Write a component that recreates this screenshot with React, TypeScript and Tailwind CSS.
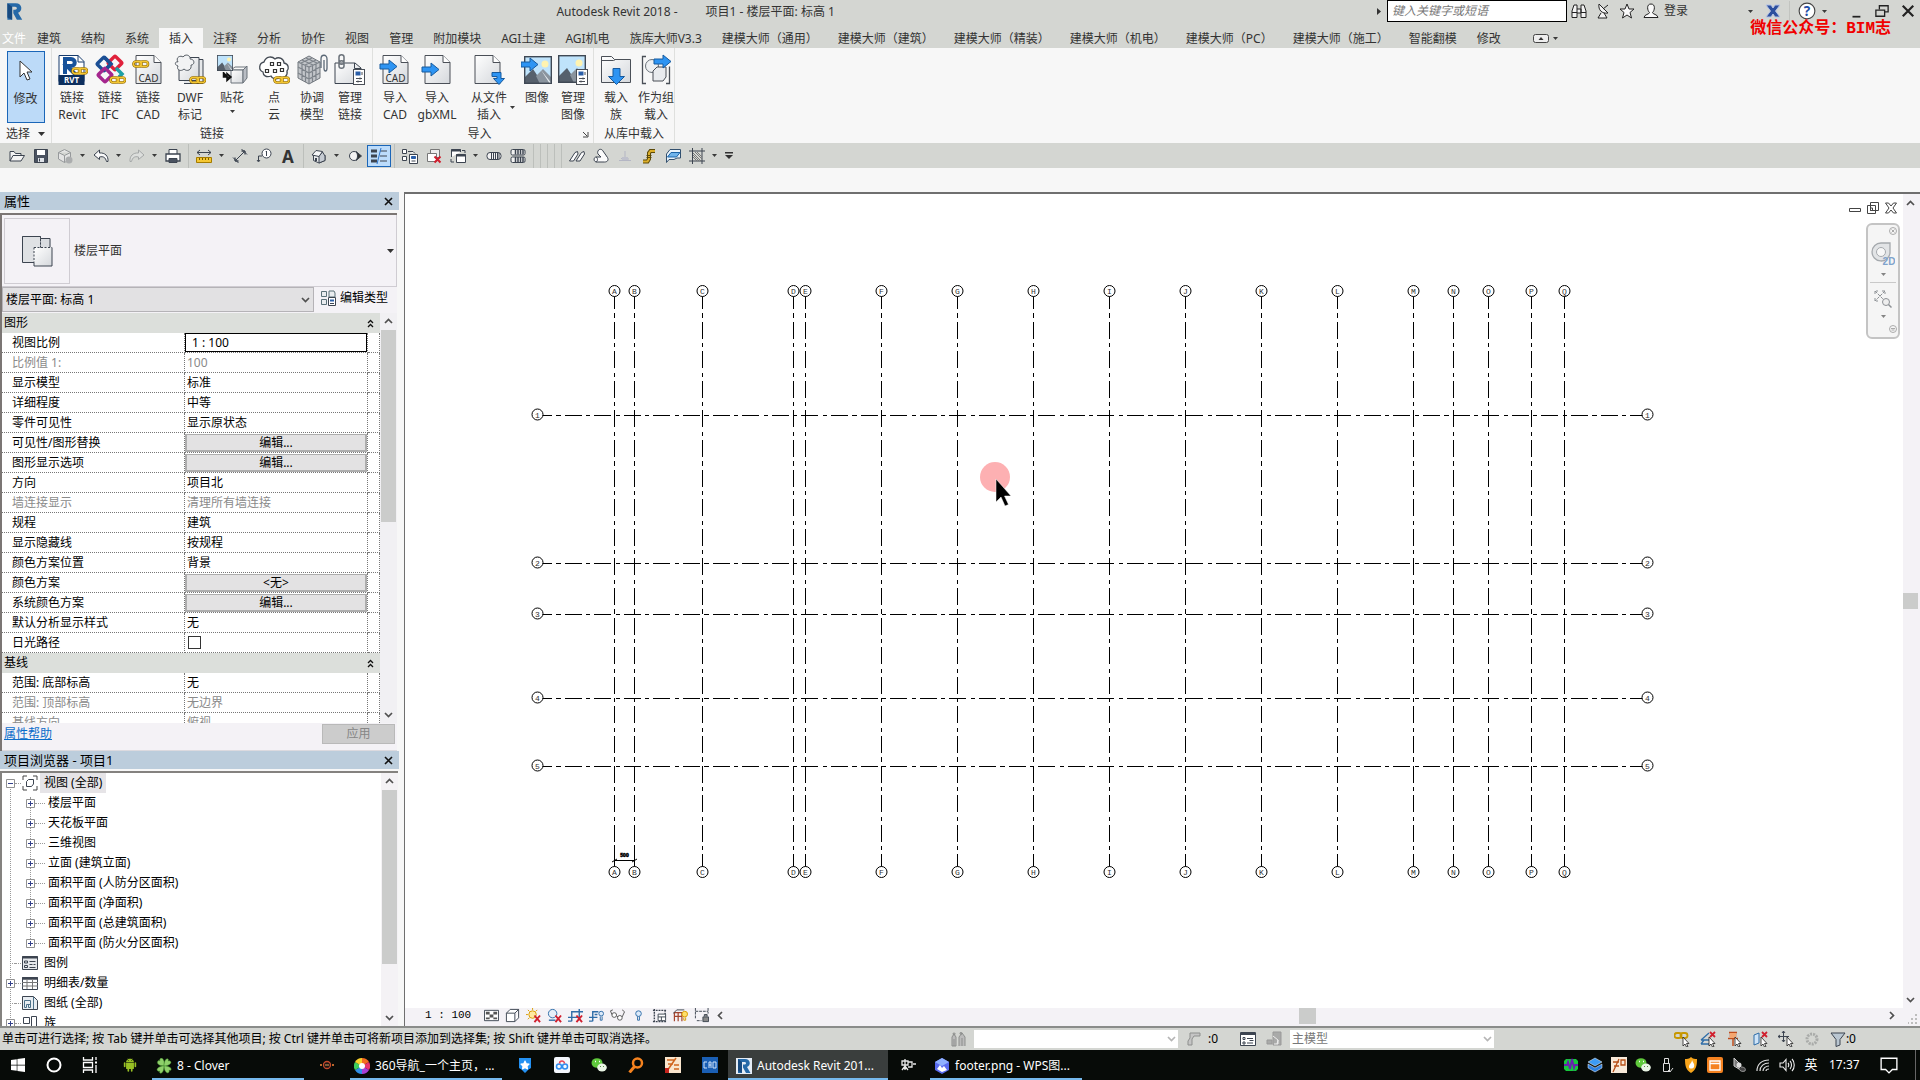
import React from 'react'
import { IoLogoAndroid } from 'react-icons/io'
import { FaWindows, FaStar } from 'react-icons/fa'

type DrawProps = { size?: number; box?: number; children: React.ReactNode }

function Draw({ size = 16, box = 16, children }: DrawProps) {
  return (
    <svg width={size} height={size} viewBox={`0 0 ${box} ${box}`} fill="none" stroke="#3c4450" strokeWidth="1" className="shrink-0" aria-hidden="true">
      {children}
    </svg>
  )
}

// yellow link badge that sits in the corner of the "link" icons
function Chain({ x, y }: { x: number; y: number }) {
  return (
    <g transform={`translate(${x} ${y})`}>
      <rect x="0.5" y="0.5" width="8" height="5" rx="2.5" stroke="#8a6400" strokeWidth="2.6" />
      <rect x="7" y="0.5" width="8" height="5" rx="2.5" stroke="#8a6400" strokeWidth="2.6" />
      <rect x="0.5" y="0.5" width="8" height="5" rx="2.5" stroke="#f5c732" strokeWidth="1.3" />
      <rect x="7" y="0.5" width="8" height="5" rx="2.5" stroke="#f5c732" strokeWidth="1.3" />
    </g>
  )
}

function Sheet({ x = 3, cad = false }: { x?: number; cad?: boolean }) {
  return (
    <g>
      <path d={`M${x} 1.5h18l7 7v21h-25z`} fill="url(#paper)" stroke="#4a4f57" />
      <path d={`M${x + 18} 1.5v7h7`} fill="#fff" stroke="#4a4f57" />
      {cad && <text x={x + 12.5} y="28" textAnchor="middle" fontSize="10" fill="#333" stroke="none">CAD</text>}
    </g>
  )
}

const ArrowRight = ({ x, y }: { x: number; y: number }) => (
  <path d={`M${x} ${y + 4}h9v-4l8 6.5-8 6.5v-4h-9z`} fill="#2d94f3" stroke="#175a9e" />
)

function Photo({ x, y, w }: { x: number; y: number; w: number }) {
  return (
    <svg x={x} y={y} width={w} height={w} viewBox="0 0 28 28" stroke="none">
      <rect width="28" height="28" fill="#bfe3fb" />
      <circle cx="21" cy="8" r="3.5" fill="#fff3b0" />
      <path d="M0 22 9 13l10 15H0z" fill="#56606c" />
      <path d="m12 20 7-7 9 9v6H16z" fill="#8a949e" />
      <path d="m17 14 9 14h2z" fill="#e8edf0" />
      <rect x="0.7" y="0.7" width="26.6" height="26.6" fill="none" stroke="#3f4854" strokeWidth="1.4" />
    </svg>
  )
}

const Manage = ({ x, y }: { x: number; y: number }) => (
  <g transform={`translate(${x} ${y})`}>
    <rect x="0.5" y="0.5" width="11" height="15" fill="#fff" stroke="#4a4f57" />
    <rect x="2.5" y="2.5" width="5" height="4" fill="#2a5ea8" stroke="none" />
    <path d="M9 3v3M3 9.5h6M3 12.5h6" stroke="#4a4f57" />
    <path d="M7 8.5v2M5 11.5v2" stroke="#4a4f57" />
  </g>
)

const bigIcons: Record<string, React.ReactNode> = {
  rvt: (
    <>
      <path d="M3 1.5h19l6 6v20H3z" fill="#fff" stroke="#173b6c" />
      <path d="M9 20V5h6c5 0 5 7 0 7h-4l8 8" stroke="#17529b" strokeWidth="4" />
      <path d="M2.5 21h26v10h-26z" fill="#0d2f5e" stroke="none" />
      <path d="M22 1v7h6" stroke="#173b6c" />
      <text x="15.5" y="29" textAnchor="middle" fontSize="8" fontWeight="700" fill="#fff" stroke="none">RVT</text>
      <Chain x={16} y={14} />
    </>
  ),
  ifc: (
    <>
      <rect x="5" y="5" width="10" height="10" rx="1" transform="rotate(45 10 10)" stroke="#1b4f95" strokeWidth="3.5" />
      <rect x="16" y="4" width="10" height="10" rx="1" transform="rotate(45 21 9)" stroke="#e0213b" strokeWidth="3.5" />
      <rect x="6" y="16" width="10" height="10" rx="1" transform="rotate(45 11 21)" stroke="#a5268e" strokeWidth="3.5" />
      <path d="m22 14 6 6-3 3" stroke="#1d9fa5" strokeWidth="3.5" />
      <path d="m10 3 7 7-4 4" stroke="#1b4f95" strokeWidth="3.5" />
      <Chain x={16} y={23} />
    </>
  ),
  cad: (
    <>
      <Sheet x={4} cad />
      <Chain x={1} y={7} />
    </>
  ),
  dwf: (
    <>
      <path d="M10 5.5h19v24H10" fill="#e6e8ea" />
      <path d="M5 3.5h20v23H5z" fill="url(#paper)" />
      <path d="M4 8c-3-5 3-7 5-5 3-4 8-1 7 2 5 0 5 6 1 6 1 5-4 7-7 4-3 3-8 1-6-3-4-1-3-5 0-4z" fill="#f2f3f4" stroke="#555c64" />
      <Chain x={16} y={23} />
    </>
  ),
  decal: (
    <>
      <path d="m15 16 4-3h11l-3 3z" fill="#fafafa" stroke="#6b727a" />
      <path d="M15 16h12v13H15z" fill="url(#paper)" stroke="#6b727a" />
      <path d="m27 16 4-4v12l-4 5z" fill="#b9bdc4" stroke="#6b727a" />
      <Photo x={1} y={1} w={16} />
      <path d="M7.5 18v5h6M11 19.5l4 3.5-4 3.5z" fill="#111" stroke="#111" strokeWidth="1.5" />
    </>
  ),
  cloud: (
    <>
      <path d="M6 8C8 2 14 2 17 5c4-3 9 0 9 4 5 1 5 6 3 8 1 5-3 8-7 6-3 3-8 2-9-1-5 2-8-1-8-4-5-2-4-9 1-10z" fill="#fff" stroke="#444b54" strokeWidth="1.3" />
      <path d="M12.5 8.5h3v3h-3zM19.5 8.5h3v3h-3zM7.5 15.5h3v3h-3zM15.5 15.5h3v3h-3zM22.5 14.5h3v3h-3z" stroke="#333" strokeWidth="1.2" />
      <Chain x={16} y={23} />
    </>
  ),
  coord: (
    <>
      <path d="m2 8 11-6 11 6v16l-11 6-11-6z" fill="#c3c6ca" stroke="#70767d" />
      <path d="m2 8 11 5 11-5M13 13v17M6 10v16M9.5 12v16M16.5 12v16M20 10v16M2 13l11 6 11-6M2 19l11 6 11-6M6 6l11 5M10 4l11 5M20 6 9 11M16 4 5 9" stroke="#7d838a" strokeWidth="1.2" />
      <path d="M28 6v8c0 4 3 4 3 0V5c0-5-6-5-6 0v9" stroke="#5b6876" strokeWidth="1.3" />
    </>
  ),
  manageLinks: (
    <>
      <path d="M1 12v17.5h26V14l-6-5H1z" fill="url(#paper)" />
      <path d="M20.5 9v5.5H27" />
      <path d="M5 3c0-3 5-3 5 0v5c0 3-5 3-5 0zM5 9c0-3 5-3 5 0v3c0 3-5 3-5 0z" stroke="#6b727a" strokeWidth="1.5" />
      <Manage x={19} y={15} />
    </>
  ),
  importCad: (
    <>
      <Sheet x={4} cad />
      <ArrowRight x={1} y={6} />
    </>
  ),
  importXml: (
    <>
      <Sheet x={4} />
      <ArrowRight x={1} y={9} />
    </>
  ),
  fromFile: (
    <>
      <Sheet x={2} />
      <path d="M19 18.5h9v6h3.5l-5.5 6-5.5-6h3.5v-2h-5z" fill="#2d94f3" stroke="#175a9e" />
    </>
  ),
  image: (
    <>
      <Photo x={3} y={2} w={28} />
      <ArrowRight x={0} y={4} />
    </>
  ),
  manageImages: (
    <>
      <Photo x={1} y={1} w={28} />
      <Manage x={19} y={15} />
    </>
  ),
  loadFamily: (
    <>
      <path d="M1.5 28.5V2.5h10l3 3h16v23z" fill="url(#paper)" stroke="#4a4f57" />
      <path d="M1.5 6.5h12l2-1" stroke="#4a4f57" />
      <path d="M13 14.5h7v8h4.5l-8 8-8-8H13z" fill="#2d94f3" stroke="#175a9e" />
    </>
  ),
  loadGroup: (
    <>
      <path d="M6 2.5H2.5v27H6M26 29.5h3.5v-17" stroke="#4a4f57" strokeWidth="1.3" />
      <circle cx="12" cy="12" r="6.5" fill="#eef0f2" stroke="#6b727a" />
      <path d="m13 17 4-4h9v10l-3 4H13z" fill="#e9ebee" stroke="#4a4f57" />
      <ArrowRight x={14} y={1} />
    </>
  ),
}

type RibbonItem = { icon: string; lines: string[]; width: string; arrow?: 'below' | 'side' }

const linkItems: RibbonItem[] = [
  { icon: 'rvt', lines: ['链接', 'Revit'], width: 'w-10' },
  { icon: 'ifc', lines: ['链接', 'IFC'], width: 'w-9' },
  { icon: 'cad', lines: ['链接', 'CAD'], width: 'w-10' },
  { icon: 'dwf', lines: ['DWF', '标记'], width: 'w-11' },
  { icon: 'decal', lines: ['贴花'], width: 'w-10', arrow: 'below' },
  { icon: 'cloud', lines: ['点', '云'], width: 'w-11' },
  { icon: 'coord', lines: ['协调', '模型'], width: 'w-8' },
  { icon: 'manageLinks', lines: ['管理', '链接'], width: 'w-11' },
]

const importItems: RibbonItem[] = [
  { icon: 'importCad', lines: ['导入', 'CAD'], width: 'w-11' },
  { icon: 'importXml', lines: ['导入', 'gbXML'], width: 'w-10' },
  { icon: 'fromFile', lines: ['从文件', '插入'], width: 'w-16', arrow: 'side' },
  { icon: 'image', lines: ['图像'], width: 'w-8' },
  { icon: 'manageImages', lines: ['管理', '图像'], width: 'w-10' },
]

const loadItems: RibbonItem[] = [
  { icon: 'loadFamily', lines: ['载入', '族'], width: 'w-11' },
  { icon: 'loadGroup', lines: ['作为组', '载入'], width: 'w-9' },
]

const tabs = ['建筑', '结构', '系统', '插入', '注释', '分析', '协作', '视图', '管理', '附加模块', 'AGI土建', 'AGI机电', '族库大师V3.3', '建模大师（通用）', '建模大师（建筑）', '建模大师（精装）', '建模大师（机电）', '建模大师（PC）', '建模大师（施工）', '智能翻模', '修改']

const Caret = ({ className = '' }: { className?: string }) => (
  <svg width="5" height="3" viewBox="0 0 5 3" className={`shrink-0 ${className}`} aria-hidden="true">
    <path d="M0 0h5L2.5 3z" fill="#3a3a3a" />
  </svg>
)

const Chevron = ({ turn = '', color = '#505050' }: { turn?: string; color?: string }) => (
  <svg width="9" height="9" viewBox="0 0 9 9" className={`shrink-0 ${turn}`} aria-hidden="true">
    <path d="m1 3 3.5 3.5L8 3" fill="none" stroke={color} strokeWidth="1.7" />
  </svg>
)

const Cross = () => (
  <svg width="9" height="9" viewBox="0 0 9 9" aria-hidden="true">
    <path d="m1 1 7 7M8 1 1 8" stroke="#111" strokeWidth="1.6" />
  </svg>
)

function RibbonPanel({ title, items, launcher }: { title: string; items: RibbonItem[]; launcher?: boolean }) {
  return (
    <section className="flex flex-col border-r border-[#dfe0de]">
      <div className="flex flex-1">
        {items.map((item) => (
          <button key={item.icon} type="button" className={`flex flex-col items-center pt-1.5 ${item.width}`}>
            <Draw size={32} box={32}>{bigIcons[item.icon]}</Draw>
            <span className="relative pt-[3px] leading-[17px] whitespace-nowrap">
              {item.lines.map((line) => <span key={line} className="block">{line}</span>)}
              {item.arrow === 'side' && <Caret className="absolute top-5 -right-2" />}
            </span>
            {item.arrow === 'below' && <Caret className="mt-1" />}
          </button>
        ))}
      </div>
      <div className="flex h-[18px] items-center px-1 leading-[18px]">
        <span className="flex-1 text-center">{title}</span>
        {launcher && (
          <button type="button" aria-label="展开">
            <svg width="7" height="7" viewBox="0 0 7 7"><path d="m1 1 4 4M6 1v5H1" fill="none" stroke="#444" /></svg>
          </button>
        )}
      </div>
    </section>
  )
}

const quick: Record<string, React.ReactNode> = {
  open: <path d="M1 13V3.5h4l1.5 2H12V8M1 13l3-5.5h11.5L12 13z" fill="#f3f3f3" />,
  save: <><path d="M1.5 1.5h13v13h-13z" fill="#4a5260" /><path d="M4 2h8v5H4z" fill="#fff" stroke="none" /><path d="M5 10h6v4H5z" fill="#dfe3e8" stroke="none" /><path d="M6.5 10.5v3" /></>,
  cube: <><path d="m1.5 4.5 6-3 6 3v6.5l-6 3.5-6-3.5zM1.5 4.5l6 3 6-3M7.5 7.5v7" stroke="#96999b" fill="#e4e4e4" /><circle cx="12" cy="12" r="3.5" fill="#abadae" stroke="none" /></>,
  undo: <path d="M6.5 2 1 7l5.5 4.5V9c4-1 6 .5 7 4.5h1.5C15.5 8 12 4.5 6.5 5z" fill="#fafafa" />,
  redo: <path d="M9.5 2 15 7l-5.5 4.5V9c-4-1-6 .5-7 4.5H1C.5 8 4 4.5 9.5 5z" fill="#dcdedc" stroke="#a5a8a8" />,
  print: <><path d="M4 6V1.5h8V6" fill="#fff" /><path d="M1 6h14v7H1z" fill="#fff" strokeWidth="1.3" /><path d="M4 10.5h8v4H4z" fill="#4a5260" /></>,
  measure: <><path d="M1 4.5h14M4 2 1 4.5 4 7M12 2l3 2.5L12 7" /><path d="M.5 9.5h15v5H.5z" fill="#f5c732" stroke="#a57c00" /><path d="M3.5 10v2M6.5 10v2M9.5 10v2M12.5 10v2" stroke="#7a5a00" /></>,
  dim: <><path d="m3 13 10-10M1 9.5 6.5 15M9.5 1 15 6.5" /><path d="M3 13V9.5M3 13h3.5M13 3v3.5M13 3H9.5" strokeWidth="1.3" /></>,
  tag: <><circle cx="10.5" cy="5.5" r="4.5" fill="#fff" /><path d="M10 3.5 10.5 3v5M6 8H2.5v5M1 12l1.5 2L4 12" /></>,
  text: <text x="8" y="14.5" textAnchor="middle" fontSize="17" fontWeight="700" fill="#333" stroke="none">A</text>,
  house: <><path d="M2.5 7v5.5L8 15l6-2.5V7" fill="#e9ebed" /><path d="M8 15V8l3.5-4L14 8v4.5z" fill="#c6ccd3" /><path d="M1 7 5 2.5l6.5 1L8 8.5z" fill="#f6f7f8" /><path d="M5 10v3" strokeWidth="2" /></>,
  section: <><circle cx="7" cy="8" r="4.5" fill="#f3f3f3" /><path d="M9 3.5 14.5 8 9 12.5c2-3 2-6 0-9z" fill="#333" /></>,
  thin: <><path d="M0 3h6M0 8h6M0 13h6" strokeWidth="3" /><path d="M9 3h7M9 8h7M9 13h7" /><path d="M10 0 6 16" stroke="#2d74c8" /></>,
  views: <><path d="M.5 1.5h4v4h-4zM.5 8.5h4v4h-4zM6 3.5h5l2 2" fill="#fff" /><path d="M7.5 6.5h8v9h-8z" fill="#fff" /><path d="M9.5 8.5h4v2h-4z" fill="#2a5ea8" stroke="#2a5ea8" /><path d="M9.5 13h4" /></>,
  closeHidden: <><path d="M4.5 1.5h9v8h-9z" fill="#eee" stroke="#777" /><path d="M1.5 5.5h9v8h-9z" fill="#fff" stroke="#777" /><path d="m8.5 8.5 6 6M14.5 8.5l-6 6" stroke="#d01f2e" strokeWidth="2" /></>,
  switch: <><path d="M1.5 9V1.5h9V4" fill="#fff" /><path d="M6.5 6.5h9v8h-9z" fill="#fff" /><path d="M1 2.5h10M6 7.5h10" strokeWidth="2" /><path d="M12 2.5h3V5M1 11v3h3" /></>,
  duct: <><rect x="1" y="4.5" width="14" height="7" rx="3" fill="#f2f2f2" /><path d="M5.5 5v6M7.5 5v6M9.5 5v6M11.5 5v6M13 5v6" /></>,
  ducts: <><rect x="1" y="1.5" width="14" height="5.5" rx="1.5" fill="#f2f2f2" /><rect x="1" y="9" width="14" height="5.5" rx="1.5" fill="#f2f2f2" /><path d="M5.5 2v4.5M8 2v4.5M10.5 2v4.5M13 2v4.5M5.5 9v5M8 9v5M10.5 9v5M13 9v5" strokeWidth="1.5" /></>,
  slabs: <path d="M.5 13 6 4.5l2.5-1L9 6 4.5 13zM7 13l5.5-8.5 2.5-1 .5 2.5L11 13z" fill="#fbfbfb" />,
  pipe: <path d="M5 3c1-2.5 4-2 5 0l4.5 6.5c1.5 3-.5 4.5-3 4.5H3c-3-1-2-5 0-5h5L5 6C4.5 5 4.5 4 5 3zM3 9c2 1 2 4 0 5" fill="#fbfbfb" />,
  faint: <><path d="M2 12.5h12M4 10.5l8 .5M8 3v8" stroke="#b4b6c4" /><path d="M5 9h6v3H5z" fill="#bfc1cc" stroke="none" /></>,
  elbow: <><path d="M2 13.5h4.5L8 11V5l1.5-2H14" stroke="#5c4a08" strokeWidth="4" /><path d="M2 13.5h4.5L8 11V5l1.5-2H14" stroke="#dcae2a" strokeWidth="2" /><path d="M5.5 7.5h5M5.5 9.5h5" stroke="#5c4a08" /></>,
  plane: <><path d="M5 1.5h10.5V10H12l-3 1.5H4L1.5 14.5V6z" fill="#eaf4fc" stroke="#33506e" /><path d="M2.5 9 6 4.5h9L11.5 9z" fill="#6fb4ec" stroke="#1c64a8" /></>,
  region: <><path d="M3.5 0v16M13 0v16M0 3h16M0 13h16" /><path d="m4 5 8 8M4 9l4 4M8 4l5 5M6 4l7 7M4 7l6 6" stroke="#777" /></>,
}

function Quick({ name, arrow, active }: { name: string; arrow?: boolean; active?: boolean }) {
  return (
    <>
      <button type="button" aria-label={name} className={`flex h-[22px] w-6 items-center justify-center ${active ? 'border border-[#1b66b8] bg-[#bcdcfb]' : ''}`}>
        <Draw>{quick[name]}</Draw>
      </button>
      {arrow && <span className="flex w-3 justify-start pl-[3px]"><Caret /></span>}
    </>
  )
}

const Rule = () => <span className="mx-[3px] h-6 w-px bg-[#bcbfbb]" />

type Prop = { label: string; value?: string; kind?: 'input' | 'button' | 'check'; dim?: boolean }

const graphics: Prop[] = [
  { label: '视图比例', value: '1 : 100', kind: 'input' },
  { label: '比例值 1:', value: '100', dim: true },
  { label: '显示模型', value: '标准' },
  { label: '详细程度', value: '中等' },
  { label: '零件可见性', value: '显示原状态' },
  { label: '可见性/图形替换', value: '编辑...', kind: 'button' },
  { label: '图形显示选项', value: '编辑...', kind: 'button' },
  { label: '方向', value: '项目北' },
  { label: '墙连接显示', value: '清理所有墙连接', dim: true },
  { label: '规程', value: '建筑' },
  { label: '显示隐藏线', value: '按规程' },
  { label: '颜色方案位置', value: '背景' },
  { label: '颜色方案', value: '<无>', kind: 'button' },
  { label: '系统颜色方案', value: '编辑...', kind: 'button' },
  { label: '默认分析显示样式', value: '无' },
  { label: '日光路径', kind: 'check' },
]

const underlay: Prop[] = [
  { label: '范围: 底部标高', value: '无' },
  { label: '范围: 顶部标高', value: '无边界', dim: true },
  { label: '基线方向', value: '俯视', dim: true },
]

function PropRow({ label, value, kind, dim }: Prop) {
  const id = `prop-${label}`
  return (
    <tr className={`h-5 ${dim ? 'text-[#8a8a8a]' : 'text-black'}`}>
      <th scope="row" className="border-r border-b border-dotted border-[#777] p-0 pl-2.5 text-left font-normal">
        <label htmlFor={kind ? id : undefined}>{label}</label>
      </th>
      <td className="border-r border-b border-dotted border-[#777] p-0">
        {kind === 'input' && <input id={id} defaultValue={value} className="block h-[19px] w-full border border-black px-1.5 outline-none" />}
        {kind === 'button' && <button id={id} type="button" className="block h-[18px] w-full border-2 border-t border-[#adadad] bg-[#e3e2e3] leading-[15px]">{value}</button>}
        {kind === 'check' && <input id={id} type="checkbox" className="ml-[3px] block size-[13px] appearance-none border border-[#333] bg-white" />}
        {!kind && <span className="pl-0.5">{value}</span>}
      </td>
      <td className="border-r border-b border-dotted border-[#777] p-0" />
    </tr>
  )
}

function GroupRow({ title }: { title: string }) {
  return (
    <tr className="h-5 bg-[#dcdfdb] text-black">
      <th colSpan={3} scope="colgroup" className="p-0 pr-1.5 pl-0.5 text-left font-normal">
        <span className="flex items-center justify-between">
          {title}
          <svg width="7" height="9" viewBox="0 0 7 9"><path d="M1 4 3.5 1.5 6 4M1 8l2.5-2.5L6 8" fill="none" stroke="#111" strokeWidth="1.3" /></svg>
        </span>
      </th>
    </tr>
  )
}

function DockTitle({ title }: { title: string }) {
  return (
    <header className="flex h-[18px] shrink-0 items-center justify-between bg-[#bccddc] pr-1.5 pl-1 text-black">
      <h2 className="text-[13px] leading-[18px]">{title}</h2>
      <button type="button" aria-label="关闭"><Cross /></button>
    </header>
  )
}

function Properties() {
  return (
    <section className="flex min-h-0 flex-1 flex-col">
      <DockTitle title="属性" />
      <div className="mt-[3px] mr-0.5 flex min-h-0 flex-1 flex-col border-t-2 border-l-2 border-[#7b7674] bg-[#f4f2f6]">
        <button type="button" className="flex h-[72px] shrink-0 items-center border-r border-b border-[#cfccd2] pr-0.5">
          <span className="ml-0.5 flex h-[66px] w-[66px] items-center justify-center border border-[#cfccd2]">
            <Draw size={32} box={32}>
              <path d="M1.5 1.5h18v26h-18z" fill="#dfe1e4" />
              <path d="M19.5 3.5h10v10h-10z" fill="#d9dce0" stroke="none" />
              <path d="M19.5 3.5h9.5v9M1.5 1.5h18" />
              <path d="M13 12.5h18v18.5H13z" fill="url(#paper)" stroke="none" />
              <path d="M31 12.5V31H13v-3.5" />
              <path d="M19.5 4v8.5M13 12.5h18M13 12.5v15" strokeDasharray="2 1.5" />
            </Draw>
          </span>
          <span className="ml-1 flex-1 text-left">楼层平面</span>
          <svg width="7" height="4" viewBox="0 0 7 4"><path d="M0 0h7L3.5 4z" fill="#333" /></svg>
        </button>
        <div className="flex h-[26px] shrink-0 items-start text-black">
          <div className="relative w-[312px]">
            <select aria-label="类型" className="block h-[25px] w-full appearance-none border border-[#b5b3b7] bg-[#e2e1e3] px-[3px]">
              <option>楼层平面: 标高 1</option>
            </select>
            <span className="pointer-events-none absolute top-2 right-1"><Chevron /></span>
          </div>
          <button type="button" className="ml-1.5 flex h-[22px] items-center gap-1">
            <Draw>
              <path d="M1.5 1.5h5v5h-5zM9 1h5l1 2v4H9zM1.5 9.5h5v5h-5z" fill="#e9ecef" stroke="#5b7078" />
              <path d="M8.5 7.5h7v8h-7z" fill="#fff" /><path d="M10 9.5h4v2h-4z" fill="#2a5ea8" stroke="none" /><path d="M10 13.5h4" />
            </Draw>
            编辑类型
          </button>
        </div>
        <div className="flex min-h-0 flex-1">
          <div className="min-h-0 flex-1 overflow-hidden bg-white">
            <table className="w-full table-fixed border-separate border-spacing-0 leading-[18px]">
              <colgroup><col /><col className="w-[183px]" /><col className="w-3" /></colgroup>
              <tbody>
                <GroupRow title="图形" />
                {graphics.map((p) => <PropRow key={p.label} {...p} />)}
                <GroupRow title="基线" />
                {underlay.map((p) => <PropRow key={p.label} {...p} />)}
              </tbody>
            </table>
          </div>
          <div className="flex w-[17px] flex-col items-center justify-between bg-[#f1f0f3]">
            <span className="flex h-[17px] items-center"><Chevron turn="rotate-180" /></span>
            <span className="mb-auto h-[192px] w-[15px] bg-[#cbcccb]" />
            <span className="flex h-[17px] items-center"><Chevron /></span>
          </div>
        </div>
        <footer className="flex h-7 shrink-0 items-start justify-between border-b border-[#dcdadf] pr-0.5">
          <a href="#help" className="pl-0.5 leading-[22px] text-[#0a6cc9] underline">属性帮助</a>
          <button type="button" disabled className="mt-px h-5 w-[73px] border border-[#b9b9b9] bg-[#cccccc] leading-[18px] text-[#868686]">应用</button>
        </footer>
      </div>
    </section>
  )
}

const viewNodes = ['楼层平面', '天花板平面', '三维视图', '立面 (建筑立面)', '面积平面 (人防分区面积)', '面积平面 (净面积)', '面积平面 (总建筑面积)', '面积平面 (防火分区面积)']

const Toggle = ({ open }: { open?: boolean }) => (
  <svg width="9" height="9" viewBox="0 0 9 9" className="relative shrink-0 bg-white" aria-hidden="true">
    <path d="M.5.5h8v8h-8z" fill="#fff" stroke="#919191" />
    <path d={open ? 'M2 4.5h5' : 'M2 4.5h5M4.5 2v5'} stroke="#33408a" />
  </svg>
)

const Twig = ({ className }: { className: string }) => <span className={`border-t border-dotted border-[#999] ${className}`} />

function RootNode({ label, icon, toggle, open }: { label: string; icon: React.ReactNode; toggle?: boolean; open?: boolean }) {
  return (
    <div className="flex h-5 items-center pl-1">
      {toggle ? <Toggle open={open} /> : <Twig className="ml-1 w-[5px]" />}
      <Twig className="w-[6px]" />
      <span className="ml-px"><Draw>{icon}</Draw></span>
      <span className={`ml-0.5 px-1 leading-5 ${open ? 'bg-[#e6e4e7]' : ''}`}>{label}</span>
    </div>
  )
}

function Browser() {
  return (
    <section className="flex h-[275px] shrink-0 flex-col">
      <DockTitle title="项目浏览器 - 项目1" />
      <div className="mt-0.5 mr-px flex min-h-0 flex-1 border-t-2 border-l-2 border-[#84827f] bg-white text-black">
        <div className="relative flex-1 overflow-hidden">
          <span className="absolute top-3 left-2 h-full border-l border-dotted border-[#999]" />
          <span className="absolute top-6 left-7 h-[150px] border-l border-dotted border-[#999]" />
          <RootNode label="视图 (全部)" toggle open icon={<><path d="M1 5V1h4M11 1h4v4M15 11v4h-4M5 15H1v-4" stroke="#444" /><path d="M4.5 6.5 6.5 4.5h5V9l-2 2.5h-5z" /></>} />
          {viewNodes.map((name) => (
            <div key={name} className="flex h-5 items-center pl-6">
              <Toggle />
              <Twig className="w-[10px]" />
              <span className="ml-[3px]">{name}</span>
            </div>
          ))}
          <RootNode label="图例" icon={<><path d="M.5 1.5h15v13H.5z" fill="#e5e8ec" /><path d="M0 2.5h16" strokeWidth="2" /><path d="M2.5 6h3v2h-3zM2.5 10.5h3v2h-3zM7.5 6.5h6M7.5 9.5h3M11.5 9.5h2M7.5 12.5h6" /></>} />
          <RootNode label="明细表/数量" toggle icon={<><path d="M.5 2.5h15v12H.5z" fill="#fff" /><path d="M0 3.5h16" strokeWidth="2.5" /><path d="M0 7.5h16M0 11h16M5 4v10M10.5 4v10" stroke="#777" /></>} />
          <RootNode label="图纸 (全部)" icon={<><path d="M.5 1.5h11l4 4v9H.5z" fill="#e8edf2" /><path d="M11.5 2v12M2.5 5.5h6v4h-4v3h-2zM6.5 9.5v3h2V7" stroke="#4c7189" /></>} />
          <RootNode label="族" toggle icon={<path d="M1.5 2.5h6v6h-6zM9.5 1.5h5v10h-5z" fill="#fff" />} />
        </div>
        <div className="flex w-[17px] flex-col items-center bg-[#f4f2f5]">
          <span className="flex h-[17px] items-center"><Chevron turn="rotate-180" /></span>
          <span className="mb-auto h-[174px] w-[15px] bg-[#cbcccb]" />
          <span className="flex h-[17px] items-center"><Chevron /></span>
        </div>
      </div>
    </section>
  )
}

// grid axes: x for the lettered columns, y for the numbered rows
const columns: [string, number][] = [['A', 614], ['B', 634], ['C', 702], ['D', 793], ['E', 805], ['F', 881], ['G', 957], ['H', 1033], ['I', 1109], ['J', 1185], ['K', 1261], ['L', 1337], ['M', 1413], ['N', 1453], ['O', 1488], ['P', 1531], ['Q', 1564]]
const rows: [string, number][] = [['1', 415], ['2', 563], ['3', 614], ['4', 698], ['5', 766]]

function Bubble({ x, y, label }: { x: number; y: number; label: string }) {
  return (
    <g>
      <circle cx={x + 0.5} cy={y} r="5.5" fill="#fff" stroke="#000" />
      <text x={x + 0.5} y={y + 3} textAnchor="middle" fontSize="8" fill="#333" className="font-['Liberation_Mono',monospace]">{label}</text>
    </g>
  )
}

function Plan() {
  return (
    <svg className="absolute inset-0 h-full w-full" aria-label="标高 1">
      <g transform="translate(-405 -194)">
        <g stroke="#000" strokeDasharray="17 4.3 4.2 4.1" shapeRendering="crispEdges">
          {columns.map(([k, x]) => <path key={k} d={`M${x + 0.5} 292V872`} />)}
          {rows.map(([k, y]) => <path key={k} d={`M535 ${y + 0.5}H1647`} />)}
        </g>
        <path d="M614 860.5h21M612 862l5-3M632 862l5-3M614.5 845v22M634.5 845v22" stroke="#000" />
        <text x="624.5" y="857" textAnchor="middle" fontSize="5" fontWeight="700" stroke="#000" strokeWidth="0.5" className="font-['Liberation_Sans',sans-serif]">500</text>
        {columns.map(([k, x]) => <React.Fragment key={k}><Bubble x={x} y={291} label={k} /><Bubble x={x} y={872} label={k} /></React.Fragment>)}
        {rows.map(([k, y]) => <React.Fragment key={k}><Bubble x={537} y={y - 0.5} label={k} /><Bubble x={1647} y={y - 0.5} label={k} /></React.Fragment>)}
        <circle cx="995" cy="477" r="15" fill="#fdb0b2" />
        <path d="M996 479v23l5-5 4 9 3.5-1.5-4-8.5h6.5z" fill="#000" stroke="#fff" strokeWidth="0.5" />
      </g>
    </svg>
  )
}

function NavBar() {
  return (
    <div className="absolute top-[29px] right-[3px] flex h-[116px] w-[34px] flex-col items-center justify-between rounded-md border-2 border-[#c4c4c4] bg-[#f5f5f5] pt-0.5 pb-1">
      <button type="button" aria-label="关闭导航栏" className="self-end pr-px"><svg width="8" height="8" viewBox="0 0 8 8" fill="none" stroke="#aaa"><circle cx="4" cy="4" r="3.5" /><path d="m2.5 2.5 3 3M5.5 2.5l-3 3" /></svg></button>
      <button type="button" aria-label="二维控制盘">
        <svg width="24" height="24" viewBox="0 0 24 24" fill="none" stroke="#a5a9ad">
          <path d="M10 1h9v10a9 9 0 1 1-9-10z" fill="#e2e4e6" strokeWidth="1.3" />
          <circle cx="10" cy="10" r="4.5" fill="#f7f7f7" />
          <text x="18" y="23" textAnchor="middle" fontSize="10" fontWeight="700" fill="#7fa3cc" stroke="none" className="font-['Liberation_Sans',sans-serif]">2D</text>
        </svg>
      </button>
      <Caret className="opacity-60" />
      <span className="h-px w-[26px] bg-[#c9c9c9]" />
      <button type="button" aria-label="缩放">
        <svg width="18" height="18" viewBox="0 0 18 18" fill="none" stroke="#8d9195">
          <path d="m1 1 9 9M11 1 1 11M1 4V1h3M8 1h3v3M1 8v3h3" strokeDasharray="3 1" /><circle cx="12" cy="12" r="3.5" fill="#eee" /><path d="m14.5 14.5 3 3" strokeWidth="1.5" />
        </svg>
      </button>
      <Caret className="opacity-60" />
      <button type="button" aria-label="选项" className="self-end pr-px"><svg width="8" height="8" viewBox="0 0 8 8" fill="none" stroke="#aaa"><circle cx="4" cy="4" r="3.5" /><path d="M2 3.5h4M2.5 5h3" /></svg></button>
    </div>
  )
}

const redX = <path d="m9 8 6 7M15 8l-6 7" stroke="#d01f2e" strokeWidth="2" />

const viewControls: [string, React.ReactNode][] = [
  ['详细程度', <><path d="M.5 2.5h15v11H.5z" fill="#fff" /><path d="M2 4h4v3H2zM10 4h4v3h-4zM6 7h4v3H6zM2 10h4v2H2zM10 10h4v2h-4z" fill="#555" stroke="none" /></>],
  ['视觉样式', <path d="M1.5 5.5h9v9h-9zM1.5 5.5l4-4h9l-4 4M14.5 1.5v9l-4 4" fill="#fff" />],
  ['日光路径', <><circle cx="7" cy="7" r="4" fill="#ffe9a0" stroke="#d99a00" /><path d="M7 0v2M0 7h2M2 2l1.5 1.5M12 2l-1.5 1.5M2 12l1.5-1.5" stroke="#d99a00" />{redX}</>],
  ['阴影', <><circle cx="6" cy="6" r="4.5" fill="#e6eff8" stroke="#2f6da8" /><path d="M2 13h7" stroke="#2f6da8" strokeWidth="1.5" />{redX}</>],
  ['裁剪视图', <><path d="M4 14V4h12M0 10h12V1M0 14h4" stroke="#2f6da8" strokeWidth="1.5" />{redX}</>],
  ['显示裁剪区域', <><path d="M4 14V4h6M0 10h9M0 14h4M6 7h3" stroke="#2f6da8" strokeWidth="1.5" /><circle cx="13" cy="6" r="2.5" fill="#dceafa" stroke="#2f6da8" /><path d="M12 9v4h2V9" stroke="#2f6da8" /></>],
  ['临时隐藏', <><circle cx="4.5" cy="7.5" r="2.5" fill="#fff" stroke="#555" /><circle cx="10.5" cy="10.5" r="2.5" fill="#fff" stroke="#555" /><path d="M2 7 .5 3 3 2M13 9.5 15.5 4 13 2M7 8.5l1.5 1" stroke="#555" /></>],
  ['显示隐藏的图元', <><circle cx="8" cy="6" r="3" fill="#dceafa" stroke="#2f6da8" /><path d="M7 9v4h2V9" stroke="#2f6da8" /></>],
  ['临时视图属性', <><path d="M1 2.5h14M1 14.5h14M2.5 1v15M14 2v5" strokeDasharray="2 1" strokeWidth="1.5" /><path d="M6.5 6.5h8v7h-8zM6.5 9.5h8M10 9.5v4" fill="#fff" /></>],
  ['分析模型', <><path d="M1.5 14V5h8v9M1.5 9h8M5.5 5v9" stroke="#a3452f" strokeWidth="1.3" /><path d="m0 6 4-4h8" /><circle cx="12.5" cy="6.5" r="3" fill="#ffdf6b" stroke="#d99a00" /><path d="M11.5 10v3h2v-3" stroke="#d99a00" /></>],
  ['约束', <><path d="M1.5 0v12M15 0v6M1.5 3.5H15M3 13.5h5" strokeDasharray="3 1" /><path d="M9.5 9.5h6v5h-6zM11 9V7h3v2" fill="#888" /></>],
]

function Canvas() {
  return (
    <main className="flex min-w-0 flex-1 flex-col border-t-2 border-l border-[#6f6f6f] bg-white">
      <div className="flex min-h-0 flex-1">
        <div className="relative min-w-0 flex-1 overflow-hidden">
          <Plan />
          <div className="absolute top-2 right-1.5 flex items-center gap-1.5 text-[#333]">
            <button type="button" aria-label="最小化"><svg width="12" height="12" viewBox="0 0 12 12"><path d="M.5 6.5h11v3H.5z" fill="none" stroke="#444" /></svg></button>
            <button type="button" aria-label="还原"><svg width="12" height="12" viewBox="0 0 12 12"><path d="M3.5.5h8v8h-8zM.5 3.5h8v8h-8zM3.5 6h2v2.5h-2z" fill="none" stroke="#444" /></svg></button>
            <button type="button" aria-label="关闭"><svg width="12" height="12" viewBox="0 0 12 12"><path d="M.5 1h3L6 4l2.5-3h3L8 6l3.5 5h-3L6 8l-2.5 3h-3L4 6z" fill="none" stroke="#444" /></svg></button>
          </div>
          <NavBar />
        </div>
        <div className="flex w-[17px] shrink-0 flex-col items-center bg-[#f4f2f6] pr-0.5">
          <span className="flex h-[18px] items-center"><Chevron turn="rotate-180" /></span>
          <span className="flex flex-1 items-center"><span className="h-4 w-[15px] bg-[#cbcccb]" /></span>
          <span className="flex h-[18px] items-center"><Chevron /></span>
        </div>
      </div>
      <div className="flex h-[18px] shrink-0 items-start bg-[#f4f2f6] leading-[15px]">
        <button type="button" className="ml-5 w-[56px] text-left font-['Liberation_Mono',monospace] text-[11px] text-black">1 : 100</button>
        {viewControls.map(([name, icon]) => (
          <button key={name} type="button" aria-label={name} className="flex w-[21px] justify-center"><Draw size={15}>{icon}</Draw></button>
        ))}
        <span className="ml-1 flex h-[15px] items-center"><Chevron turn="rotate-90" /></span>
        <span className="ml-[574px] h-4 w-[17px] bg-[#cbcccb]" />
        <span className="mr-3 ml-auto flex h-[15px] items-center"><Chevron turn="-rotate-90" /></span>
        <svg width="10" height="10" viewBox="0 0 10 10" className="mt-1.5 mr-0.5"><path d="M7 0h2v2H7zM7 4h2v2H7zM7 8h2v2H7zM3 4h2v2H3zM3 8h2v2H3zM0 8h1v2H0z" fill="#bdbdbd" /></svg>
      </div>
    </main>
  )
}

const pointer = <path d="M9 6v9l2-2 1.5 3 1.5-.5L12.5 12.5H15z" fill="#fff" stroke="#222" strokeWidth="0.8" />

const selectTools: [string, React.ReactNode][] = [
  ['选择链接', <><rect x="0.5" y="2" width="7" height="5" rx="2.5" stroke="#c79700" strokeWidth="1.8" /><rect x="6.5" y="2" width="7" height="5" rx="2.5" stroke="#c79700" strokeWidth="1.8" />{pointer}</>],
  ['选择基线图元', <><path d="m1 9 8-7M1 9h8M1 13h8M1 13l3-4" stroke="#2f6da8" strokeWidth="1.3" /><path d="m10 1 5 5M15 1l-5 5" stroke="#d01f2e" strokeWidth="1.8" />{pointer}</>],
  ['选择锁定图元', <><path d="M3 1.5h8M4.5 2v4M9.5 2v4M2 7.5h10M7 8v7" stroke="#bf4d1d" strokeWidth="1.5" /><path d="M4 2h6v5H4z" fill="#f4a670" stroke="none" />{pointer}</>],
  ['按面选择图元', <><path d="m2 4 5-2v10l-5 2z" fill="#cfe4f7" stroke="#2f6da8" /><path d="m10 1 5 5M15 1l-5 5" stroke="#d01f2e" strokeWidth="1.8" />{pointer}</>],
  ['选择时拖拽图元', <><path d="M5.5 0v11M0 5.5h11M4 2l1.5-2L7 2M4 9l1.5 2L7 9M2 4 0 5.5 2 7" />{pointer}</>],
  ['后台进程', <circle cx="8" cy="8" r="5" stroke="#a9aba9" strokeWidth="3" strokeDasharray="2 1" />],
]

function StatusBar() {
  return (
    <footer className="flex h-6 shrink-0 items-center border-t-2 border-[#8a8c8a] bg-[#d4d6d2] text-black">
      <p className="w-1/2 pl-0.5 whitespace-nowrap">单击可进行选择; 按 Tab 键并单击可选择其他项目; 按 Ctrl 键并单击可将新项目添加到选择集; 按 Shift 键并单击可取消选择。</p>
      <div className="-ml-2.5 flex flex-1 items-center">
        <Draw><path d="M2 15V6l2-3 2 3v9zM9 15V6l3-4 3 4v9M4 8v7M12 7v8M4 2a1 1 0 1 0 .1 0M11 1.5a1 1 0 1 0 .1 0" fill="#bbb" stroke="#8d8f8d" /></Draw>
        <div className="relative ml-2 w-[204px]">
          <select aria-label="工作集" className="block h-[18px] w-full appearance-none bg-white px-1"><option /></select>
          <span className="pointer-events-none absolute top-1 right-0.5"><Chevron color="#b5b5b5" /></span>
        </div>
        <button type="button" aria-label="可编辑" className="ml-2 flex items-center gap-1.5"><Draw><path d="M4 2h10v3H8l-2 3v6H2v-4l2-3z" fill="#c5c5c5" stroke="#8d8f8d" /></Draw>:0</button>
        <button type="button" aria-label="设计选项" className="ml-[22px]"><Draw><path d="M.5 1.5h15v13H.5z" fill="#fff" /><path d="M0 3h16" strokeWidth="2" /><path d="M3 6.5h2v2H3zM7 7.5h6M3 11h2v2H3zM7 12h6M9.5 9.5h4" /></Draw></button>
        <button type="button" aria-label="添加到集" className="ml-2.5"><Draw><path d="M1 9h5v4H1zM7 1h8v13H7z" fill="#a9aaa9" stroke="#999" /><path d="m7 5 5 4-1 4M12 9v4H8" stroke="#eee" /></Draw></button>
        <div className="relative ml-2 w-[204px] text-[#777]">
          <select aria-label="设计选项" className="block h-[18px] w-full appearance-none bg-white px-0.5 leading-[16px]"><option>主模型</option></select>
          <span className="pointer-events-none absolute top-1 right-0.5"><Chevron color="#b5b5b5" /></span>
        </div>
        <div className="mr-16 ml-auto flex items-center gap-2.5">
          {selectTools.map(([name, icon]) => <button key={name} type="button" aria-label={name}><Draw>{icon}</Draw></button>)}
          <button type="button" aria-label="过滤器" className="flex items-center"><Draw><path d="M1 2h14L10 8.5V14l-4 1.5v-7z" fill="#b9c6d1" /></Draw>:0</button>
        </div>
      </div>
    </footer>
  )
}

function TaskItem({ icon, label, active }: { icon: React.ReactNode; label: string; active?: boolean }) {
  return (
    <button type="button" className={`flex h-full items-center gap-[5px] border-b-2 border-[#76b9ed] pt-[3px] text-left whitespace-nowrap ${active ? 'w-[160px] bg-[#3a3e3d] pl-2' : 'w-[152px] pl-1'}`}>
      {icon}
      {label}
    </button>
  )
}

const TaskIcon = ({ label, children, className = 'w-[37px]' }: { label: string; children: React.ReactNode; className?: string }) => (
  <button type="button" aria-label={label} className={`flex shrink-0 justify-center ${className}`}>{children}</button>
)

function RevitMark({ size = 16, tile }: { size?: number; tile?: boolean }) {
  return (
    <svg width={size} height={size} viewBox="0 0 16 16" className="shrink-0" aria-hidden="true">
      {tile && <path d="M0 0h16v16H0z" fill="#e4ecf5" />}
      <path d="M2 1h7c6 0 6 7 2 8l3.5 6H10L7 9.5V6.5h1.5c2 0 2-2.5 0-2.5H6v11H2z" fill="#2569a8" />
      <path d="M2 1 6 4v11l-4-2z" fill="#174a80" />
    </svg>
  )
}

function TaskBar() {
  return (
    <nav className="flex h-[30px] shrink-0 items-center bg-[#070b08] text-white">
      <TaskIcon label="开始" className="w-9"><FaWindows size={16} /></TaskIcon>
      <TaskIcon label="Cortana" className="w-9"><Draw><circle cx="8" cy="8" r="6.5" stroke="#fff" strokeWidth="2" /></Draw></TaskIcon>
      <TaskIcon label="任务视图" className="w-9"><Draw><path d="M1.5 0v3h9V0M1.5 16v-3h9v3M1.5 5.5h9v5h-9zM14 0v3M14 8v8" stroke="#fff" strokeWidth="1.3" /><path d="M13 4.5h2v2h-2z" fill="#fff" stroke="none" /></Draw></TaskIcon>
      <TaskIcon label="Android" className="w-11"><IoLogoAndroid size={18} color="#97c024" /></TaskIcon>
      <TaskItem label="8 - Clover" icon={<Draw><g fill="#8fd06a" stroke="#3f8a2a" strokeWidth="0.5"><path d="M8 8C3 8 0 5 2 3c1-1 2 0 2 0s-1-2 1-3c2 0 4 3 3 8z" /><path d="M8 8c0-5 2-8 4-7 1 1 0 2 0 2s2-1 3 1c0 2-3 4-7 4z" /><path d="M8 8c5 0 8 2 7 4-1 1-2 0-2 0s1 2-1 3c-2 0-4-3-4-7z" /><path d="M8 8c0 5-2 8-4 7-1-1 0-2 0-2s-2 1-3-1c0-2 3-4 7-4z" /></g></Draw>} />
      <TaskIcon label="AZ" className="w-[46px]"><Draw><path d="M1 8h14" stroke="#b9672c" strokeWidth="2" strokeDasharray="2 1" /><circle cx="8" cy="8" r="3.5" stroke="#c4472b" fill="#1b1513" strokeWidth="1.3" /><path d="M6 8h4" stroke="#e3a35c" /></Draw></TaskIcon>
      <TaskItem
        label="360导航_一个主页，..."
        icon={
          <Draw>
            <g stroke="none"><path d="M8 8V0a8 8 0 0 1 7 4z" fill="#f36c21" /><path d="m8 8 7-4a8 8 0 0 1 0 8z" fill="#e8336d" /><path d="m8 8 7 4a8 8 0 0 1-7 4z" fill="#a83fd6" /><path d="M8 8v8a8 8 0 0 1-7-4z" fill="#2f8fe8" /><path d="m8 8-7 4a8 8 0 0 1 0-8z" fill="#3ecf5c" /><path d="M8 8 1 4a8 8 0 0 1 7-4z" fill="#f9d12b" /><circle cx="8" cy="8" r="3" fill="#fff" /></g>
          </Draw>
        }
      />
      <span className="w-1" />
      <TaskIcon label="星标"><Draw><path d="M2 1h12v10l-3 2-3 3-3-3-3-2z" fill="#2492f3" stroke="none" /><FaStar x="3" y="3" size={10} color="#fff" /></Draw></TaskIcon>
      <TaskIcon label="网盘"><Draw><rect width="16" height="16" rx="2" fill="#f4f8fd" stroke="none" /><circle cx="5" cy="9.5" r="2.5" stroke="#2e8df0" strokeWidth="1.5" /><circle cx="11" cy="9.5" r="2.5" stroke="#2e8df0" strokeWidth="1.5" /><path d="M5.5 6.5a2.5 2.5 0 0 1 5 0" stroke="#e8455a" strokeWidth="1.5" /></Draw></TaskIcon>
      <TaskIcon label="微信"><WeChat /></TaskIcon>
      <TaskIcon label="搜索"><Draw><circle cx="9.5" cy="6" r="4.5" stroke="#f5831f" strokeWidth="2.5" /><path d="m6.5 9.5-5 6" stroke="#f5831f" strokeWidth="3" /></Draw></TaskIcon>
      <TaskIcon label="格式"><Draw><path d="M0 0h16v16H0z" fill="#f9e6cd" stroke="none" /><path d="M2 3h7M3 7h5M2 14l9-13M9 8h5M9 12h5" stroke="#d0651d" strokeWidth="1.5" /><path d="M0 11h4v5H0z" fill="#c4241d" stroke="none" /></Draw></TaskIcon>
      <TaskIcon label="CAD"><Draw><path d="M0 0h16v16H0z" fill="#1a5fb4" stroke="none" /><path d="M5 5H2v6h3M7 11V5h2v6M7 8h2M11 5v6h3V5z" stroke="#cfe3fa" /></Draw></TaskIcon>
      <TaskItem active label="Autodesk Revit 201..." icon={<RevitMark tile />} />
      <TaskIcon label="录屏" className="w-[42px]"><Draw><path d="M1 4h6v4H1zM4 2v11M1 13l3-4 3 4M7 5h4v5H7M12 7h3" stroke="#e8e8e8" strokeWidth="1.3" /></Draw></TaskIcon>
      <TaskItem label="footer.png - WPS图..." icon={<Draw><path d="m8 0 7 4v8l-7 4-7-4V4z" fill="#5a6cf0" stroke="none" /><path d="m8 0 7 4-7 4-7-4z" fill="#8fb0ff" stroke="none" /><path d="m3 11 3-4 2 3 2-2 3 4-5 2z" fill="#fff" stroke="none" /></Draw>} />
      <div className="ml-auto flex h-full items-center">
        <TaskIcon label="音频" className="w-6"><Draw><path d="M3 2h10l2 2v8l-2 2H3l-2-2V4z" fill="#16c93c" stroke="none" /><path d="M1 8h3l1-3 2 7 2-10 2 9 1-3h3" stroke="#6a1fb0" strokeWidth="1.8" /></Draw></TaskIcon>
        <TaskIcon label="层" className="w-6"><Draw><path d="m8 1 7 4-7 4-7-4z" fill="#3d9bf5" stroke="#fff" strokeWidth="0.5" /><path d="m1 7 7 4 7-4v4l-7 4-7-4z" fill="#2c7fe0" stroke="#fff" strokeWidth="0.5" /></Draw></TaskIcon>
        <TaskIcon label="输入" className="w-6"><Draw><path d="M0 0h16v16H0z" fill="#f8ead9" stroke="none" /><path d="M2 5h6M3 9h5M2 15 8 2M10 3h4v5h-4z" stroke="#b75018" strokeWidth="1.3" /></Draw></TaskIcon>
        <TaskIcon label="微信" className="w-6"><WeChat /></TaskIcon>
        <TaskIcon label="USB" className="w-6"><Draw><path d="M4.5 6.5h6v8h-6zM5.5 6V1.5h4V6M9 13l2 2 3-4" stroke="#ddd" /></Draw></TaskIcon>
        <TaskIcon label="安全" className="w-6"><Draw><path d="M8 0c2 2 4 2 6 2 0 7-1 11-6 14C3 13 2 9 2 2c2 0 4 0 6-2z" fill="#f8a51b" stroke="none" /><path d="M9 3c1 3 3 4 2 7-1 2-5 2-5 0 0-3 3-4 3-7z" fill="#fff" stroke="none" /></Draw></TaskIcon>
        <TaskIcon label="窗口" className="w-6"><Draw><rect width="16" height="16" rx="2" fill="#f58220" stroke="none" /><path d="M3 4h10v9H3zM3 6.5h10" stroke="#fff" strokeWidth="1.3" /></Draw></TaskIcon>
        <TaskIcon label="扬声器" className="w-6"><Draw><path d="M3 1 9 7l-1 5-5-3z" fill="#777" stroke="#ccc" /><circle cx="8" cy="8" r="2.5" fill="#ddd" stroke="none" /><path d="M10 10c4 0 5 2 4 4-3 1-5 0-6-2" fill="#444" stroke="#999" /></Draw></TaskIcon>
        <TaskIcon label="网络" className="w-6"><Draw><path d="M2 14C2 7 7 3 14 3M5 14c0-5 4-8 9-8M8 14c0-3 3-5 6-5M11 14c0-1 1-2 3-2" stroke="#ddd" strokeWidth="1.2" /></Draw></TaskIcon>
        <TaskIcon label="音量" className="w-6"><Draw><path d="M1 6h3l3-3.5v11L4 10H1zM9 6c1 1 1 3 0 4M11 4c2 2 2 6 0 8M13 2c3 3 3 9 0 12" stroke="#eee" strokeWidth="1.1" /></Draw></TaskIcon>
        <button type="button" className="w-6 text-center text-[13px]">英</button>
        <time className="ml-1.5 w-[34px]">17:37</time>
        <TaskIcon label="通知" className="ml-3.5 w-6"><Draw size={18}><path d="M1 2h14v10h-4l-3 3-3-3H1z" stroke="#fff" strokeWidth="1.2" /></Draw></TaskIcon>
        <span className="mr-1 ml-3.5 h-full w-px bg-[#666]" />
      </div>
    </nav>
  )
}

function WeChat() {
  return (
    <Draw>
      <ellipse cx="6" cy="6" rx="5.5" ry="4.8" fill="#5fc93c" stroke="none" />
      <ellipse cx="11" cy="10.5" rx="4.8" ry="4" fill="#e9f5e4" stroke="none" />
      <path d="M4 4.5h1M8 4.5h1" stroke="#fff" strokeWidth="1.5" />
      <path d="M9 9.5h1M12 9.5h1" stroke="#5a8a4a" />
    </Draw>
  )
}

function TitleBar() {
  return (
    <header className="relative flex h-7 shrink-0 items-start bg-[#d4d6d2]">
      <span className="pt-0.5 pl-[5px]"><RevitMark size={19} /></span>
      <h1 className="ml-[27%] pl-3.5 leading-6 whitespace-pre">Autodesk Revit 2018 -</h1>
      <span className="ml-7 leading-6">项目1 - 楼层平面: 标高 1</span>
      <div className="ml-auto flex h-[22px] items-center">
        <svg width="4" height="7" viewBox="0 0 4 7"><path d="m0 0 4 3.5L0 7z" fill="#333" /></svg>
        <input aria-label="搜索" placeholder="键入关键字或短语" className="ml-1.5 h-[22px] w-[180px] border border-black bg-white px-1 pb-0.5 italic outline-none placeholder:text-[#777]" />
        <div className="ml-1 flex items-center gap-2">
          <button type="button" aria-label="搜索"><Draw><path d="M1 14.5V8l2-6h3v12.5zM15 14.5V8l-2-6h-3v12.5zM6 6h4v4H6M1 9.5h5M10 9.5h5" fill="#f3f3f3" stroke="#222" /></Draw></button>
          <button type="button" aria-label="通讯中心"><Draw><path d="M4 1c-1 6 3 10 9 9zM8 6l5-4M6 10l-3 5h9l-3-5" fill="#f3f3f3" stroke="#222" /></Draw></button>
          <button type="button" aria-label="收藏夹"><Draw><path d="m8 1 2 5h5l-4 3.5 1.5 5.5L8 12l-4.5 3L5 9.5 1 6h5z" fill="#fafafa" stroke="#222" /></Draw></button>
          <button type="button" className="flex items-center gap-[5px]"><Draw><path d="M8 1c-5 0-3.5 7-1.5 8.5 0 2-5 1.5-5.5 5h14c-.5-3.5-5.5-3-5.5-5C11.5 8 13 1 8 1z" fill="#fafafa" stroke="#222" /></Draw>登录</button>
        </div>
        <Caret className="ml-[60px]" />
        <button type="button" aria-label="Exchange" className="ml-3"><Draw><path d="M1 2h5l2 3 2-3h5l-4.5 6 4.5 6h-5l-2-3-2 3H1l4.5-6z" fill="#2c4f9e" stroke="#b5c3e4" /></Draw></button>
        <span className="mx-2 h-5 w-px bg-[#c2c4c0]" />
        <button type="button" aria-label="帮助" className="flex items-center gap-1.5">
          <Draw size={18}><circle cx="8" cy="8" r="7" fill="#fff" stroke="#444" /><text x="8" y="12" textAnchor="middle" fontSize="12" fontWeight="700" fill="#1f4fa8" stroke="none">?</text></Draw>
          <Caret />
        </button>
        <div className="mr-[5px] ml-[22px] flex items-center gap-3">
          <button type="button" aria-label="最小化"><Draw size={14}><path d="M4 14.5h9" stroke="#222" strokeWidth="2" /></Draw></button>
          <button type="button" aria-label="还原"><Draw size={14}><path d="M5 6V2h10v7h-4M1 7h10v7H1z" stroke="#222" strokeWidth="1.5" /></Draw></button>
          <button type="button" aria-label="关闭"><Draw size={14}><path d="m2 2 12 12M14 2 2 14" stroke="#222" strokeWidth="2.5" /></Draw></button>
        </div>
      </div>
      <span className="absolute top-[21px] right-[29px] z-10 font-['Liberation_Mono','Noto_Sans_CJK_SC',monospace] text-base leading-4 font-bold whitespace-nowrap text-[#f00000]">微信公众号：BIM志</span>
    </header>
  )
}

export default function App() {
  return (
    <div className="flex h-screen flex-col overflow-hidden bg-[#f7f7f7] font-['Noto_Sans','Noto_Sans_CJK_SC',sans-serif] text-xs text-[#333]">
      <svg width="0" height="0" className="absolute" aria-hidden="true">
        <defs>
          <linearGradient id="paper" x1="0" y1="0" x2="1" y2="1">
            <stop offset="0" stopColor="#ffffff" />
            <stop offset="1" stopColor="#d5d8dc" />
          </linearGradient>
        </defs>
      </svg>
      <TitleBar />
      <div className="flex h-5 shrink-0 items-stretch bg-[#d4d6d2] leading-[18px] whitespace-nowrap">
        <button type="button" className="w-[27px] pt-0.5 pl-0.5 text-left text-white">文件</button>
        {tabs.map((tab) => (
          <button key={tab} type="button" className={`px-2.5 pt-0.5 ${tab === '插入' ? 'bg-[#f7f7f7]' : ''}`}>{tab}</button>
        ))}
        <button type="button" aria-label="最小化功能区" className="ml-[22px] flex items-center gap-1">
          <svg width="16" height="9" viewBox="0 0 16 9"><rect x="0.5" y="0.5" width="15" height="8" rx="2" fill="#eee" stroke="#444" /><path d="m5.5 6 2.5-3L10.5 6z" fill="#333" /></svg>
          <Caret />
        </button>
      </div>
      <div className="flex h-[95px] shrink-0">
        <section className="flex w-[52px] flex-col items-center border-r border-[#dfe0de]">
          <button type="button" className="mt-[3px] flex h-[72px] w-[38px] flex-col items-center border border-[#1b66b8] bg-[#bcdaf8] pt-2">
            <svg width="14" height="22" viewBox="0 0 14 22"><path d="M1 1v16l4-4 3 7 3-1-3-7h5z" fill="#fff" stroke="#333" /></svg>
            <span className="pt-2 leading-[17px]">修改</span>
          </button>
          <button type="button" className="mt-0.5 flex h-[18px] items-center gap-2 leading-[18px]">选择<svg width="7" height="4" viewBox="0 0 7 4"><path d="M0 0h7L3.5 4z" fill="#333" /></svg></button>
        </section>
        <RibbonPanel title="链接" items={linkItems} />
        <RibbonPanel title="导入" items={importItems} launcher />
        <RibbonPanel title="从库中载入" items={loadItems} />
      </div>
      <div className="flex h-[25px] shrink-0 items-center bg-[#d4d6d2] pl-[5px]">
        <Quick name="open" />
        <Quick name="save" />
        <Quick name="cube" arrow />
        <Quick name="undo" arrow />
        <Quick name="redo" arrow />
        <Quick name="print" />
        <Rule />
        <Quick name="measure" arrow />
        <Quick name="dim" />
        <Quick name="tag" />
        <Quick name="text" />
        <Rule />
        <Quick name="house" arrow />
        <Quick name="section" />
        <Quick name="thin" active />
        <Rule />
        <Quick name="views" />
        <Quick name="closeHidden" />
        <Quick name="switch" arrow />
        <Quick name="duct" />
        <Quick name="ducts" />
        {[1, 2, 3, 4, 5].map((n) => <Rule key={n} />)}
        <Quick name="slabs" />
        <Quick name="pipe" />
        <Quick name="faint" />
        <Quick name="elbow" />
        <Quick name="plane" />
        <Quick name="region" arrow />
        <button type="button" aria-label="自定义" className="ml-1"><svg width="8" height="7" viewBox="0 0 8 7"><path d="M0 0h8v1.5H0zM0 3h8L4 7z" fill="#333" /></svg></button>
      </div>
      <div className="flex min-h-0 flex-1 pt-6">
        <aside className="mr-[5px] flex w-[399px] shrink-0 flex-col">
          <Properties />
          <Browser />
        </aside>
        <Canvas />
      </div>
      <StatusBar />
      <TaskBar />
    </div>
  )
}
